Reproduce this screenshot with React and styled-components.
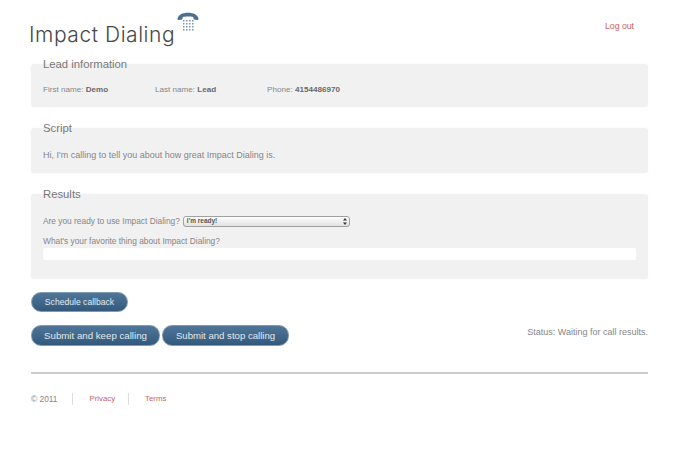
import React from "react";
import styled, { createGlobalStyle } from "styled-components";

const GlobalStyle = createGlobalStyle`
  body {
    margin: 0;
    background: #fff;
    font-family: "Liberation Sans", Arial, sans-serif;
    color: #777;
  }
`;

const Page = styled.div`
  width: 617px;
  padding: 0 34px 0 31px;
`;

const Header = styled.header`
  height: 57px;
  display: flex;
  justify-content: space-between;
`;

const Logo = styled.div`
  display: flex;
  align-items: flex-start;
  margin-left: -2px;
`;

const LogoText = styled.div`
  margin-top: 20px;
  font-family: Inter, sans-serif;
  font-weight: 300;
  font-size: 21px;
  line-height: 29px;
  letter-spacing: 0.55px;
  color: #484848;
`;

const LogoMark = styled.svg`
  margin: 12px 0 0 2px;
  display: block;
`;

const LogOut = styled.a`
  margin: 20px 14px 0 0;
  font-size: 8.7px;
  line-height: 12px;
  color: #c9625d;
`;

const Panel = styled.fieldset`
  margin: 0 0 ${(p) => p.$gap}px;
  padding: 0 12px;
  min-width: 0;
  border: 0;
  border-radius: 4px;
  background: #f1f1f1;
  box-shadow: 0 0 1px #ddd;
  height: ${(p) => p.$height}px;
  box-sizing: border-box;
`;

const Legend = styled.legend`
  padding: 0;
  font-size: 11.3px;
  line-height: 14px;
  color: #777;
`;

const LeadRow = styled.div`
  display: flex;
  padding-top: 13px;
  font-size: 8.1px;
  line-height: 12px;
  color: #868686;
  strong {
    color: #6a6a6a;
  }
`;

const LeadField = styled.div`
  width: ${(p) => p.$width}px;
`;

const ScriptText = styled.p`
  margin: 0;
  padding-top: 13px;
  font-size: 9px;
  line-height: 14px;
  color: #868686;
`;

const Question = styled.div`
  display: flex;
  align-items: center;
  font-size: 8.35px;
  line-height: 12px;
  color: #868686;
`;

const FakeSelect = styled.div`
  box-sizing: border-box;
  width: 167px;
  height: 11px;
  margin-left: 3px;
  padding: 0 2px 0 3px;
  display: flex;
  align-items: center;
  justify-content: space-between;
  border: 1px solid #a0a0a0;
  border-radius: 3px;
  background: linear-gradient(#fdfdfd, #e2e2e2);
  font-size: 6.5px;
  font-weight: bold;
  color: #555;
`;

const Arrows = styled.svg`
  display: block;
`;

const FreeText = styled.input`
  display: block;
  box-sizing: border-box;
  width: 100%;
  height: 12px;
  margin-top: 1px;
  padding: 0;
  border: 0;
  border-radius: 2px;
  background: #fff;
`;

const Spaced = styled.div`
  margin-top: ${(p) => p.$top}px;
`;

const Actions = styled.div`
  display: flex;
  align-items: flex-end;
  justify-content: space-between;
  margin-top: 13px;
`;

const Button = styled.button`
  display: block;
  box-sizing: border-box;
  height: ${(p) => p.$height}px;
  padding: 0;
  width: ${(p) => p.$width}px;
  border: 1px solid #7f9bb1;
  border-radius: 10px;
  background: linear-gradient(#4f7698, #335a7d);
  color: #e4e9ee;
  font-family: inherit;
  font-size: ${(p) => p.$size}px;
`;

const ButtonRow = styled.div`
  display: flex;
  gap: 2px;
`;

const Status = styled.div`
  margin-bottom: 8px;
  font-size: 9px;
  line-height: 12px;
  color: #868686;
`;

const Rule = styled.hr`
  margin: 26px 0 0;
  height: 2px;
  border: 0;
  background: #cccccc;
`;

const Footer = styled.footer`
  display: flex;
  align-items: center;
  margin-top: 19px;
  font-size: 8.4px;
  line-height: 12px;
  color: #888;
`;

const FooterNote = styled.span`
  padding-right: 14px;
  border-right: 1px solid #ddd;
`;

const FooterLink = styled.a`
  padding: 0 13px 0 ${(p) => (p.$last ? 16 : 17)}px;
  border-right: ${(p) => (p.$last ? "0" : "1px solid #ddd")};
  font-size: 7.8px;
  color: #c9625d;
`;

const padX = [0, 3, 6, 9];
const padY = [8, 11, 14, 17];

function PhoneMark() {
  return (
    <LogoMark width="22" height="20" viewBox="0 0 22 20">
      <path
        d="M.5 7C1 2.800 5.500 .8 11 .8S21 2.800 21.500 7c0 .7-.5 1.200-1.200 1.100l-3.200-.7c-.5-.2-.7-.6-.7-1.100l-.2-1.300C14 4.300 8 4.300 5.800 5l-.2 1.300c0 .5-.2.9-.7 1.100l-3.200.7C1 8.200.5 7.700.5 7z"
        fill="#4a7091"
      />
      {padY.map((y) =>
        padX.map((x) => (
          <rect key={`${x}-${y}`} x={x + 6} y={y} width="1.500" height="1.500" fill="#7891a8" />
        ))
      )}
    </LogoMark>
  );
}

function SelectArrows() {
  return (
    <Arrows width="4" height="7" viewBox="0 0 4 7">
      <path d="M2 0L4 2.500H0zM2 7L0 4.500h4z" fill="#333" />
    </Arrows>
  );
}

export default function App() {
  return (
    <Page>
      <GlobalStyle />
      <Header>
        <Logo>
          <LogoText>Impact Dialing</LogoText>
          <PhoneMark />
        </Logo>
        <LogOut>Log out</LogOut>
      </Header>

      <Panel $height={50} $gap={14}>
        <Legend>Lead information</Legend>
        <LeadRow>
          <LeadField $width={112}>
            First name: <strong>Demo</strong>
          </LeadField>
          <LeadField $width={112}>
            Last name: <strong>Lead</strong>
          </LeadField>
          <LeadField $width={120}>
            Phone: <strong>4154486970</strong>
          </LeadField>
        </LeadRow>
      </Panel>

      <Panel $height={52} $gap={14}>
        <Legend>Script</Legend>
        <ScriptText>Hi, I'm calling to tell you about how great Impact Dialing is.</ScriptText>
      </Panel>

      <Panel $height={92} $gap={13}>
        <Legend>Results</Legend>
        <Spaced $top={14}>
          <Question>
            Are you ready to use Impact Dialing?
            <FakeSelect>
              I'm ready!
              <SelectArrows />
            </FakeSelect>
          </Question>
        </Spaced>
        <Spaced $top={8}>
          <Question>What's your favorite thing about Impact Dialing?</Question>
          <FreeText />
        </Spaced>
      </Panel>

      <Button $width={97} $height={20} $size={8.6}>Schedule callback</Button>

      <Actions>
        <ButtonRow>
          <Button $width={129} $height={21} $size={9.7}>Submit and keep calling</Button>
          <Button $width={127} $height={21} $size={9.6}>Submit and stop calling</Button>
        </ButtonRow>
        <Status>Status: Waiting for call results.</Status>
      </Actions>

      <Rule />

      <Footer>
        <FooterNote>© 2011</FooterNote>
        <FooterLink>Privacy</FooterLink>
        <FooterLink $last>Terms</FooterLink>
      </Footer>
    </Page>
  );
}
